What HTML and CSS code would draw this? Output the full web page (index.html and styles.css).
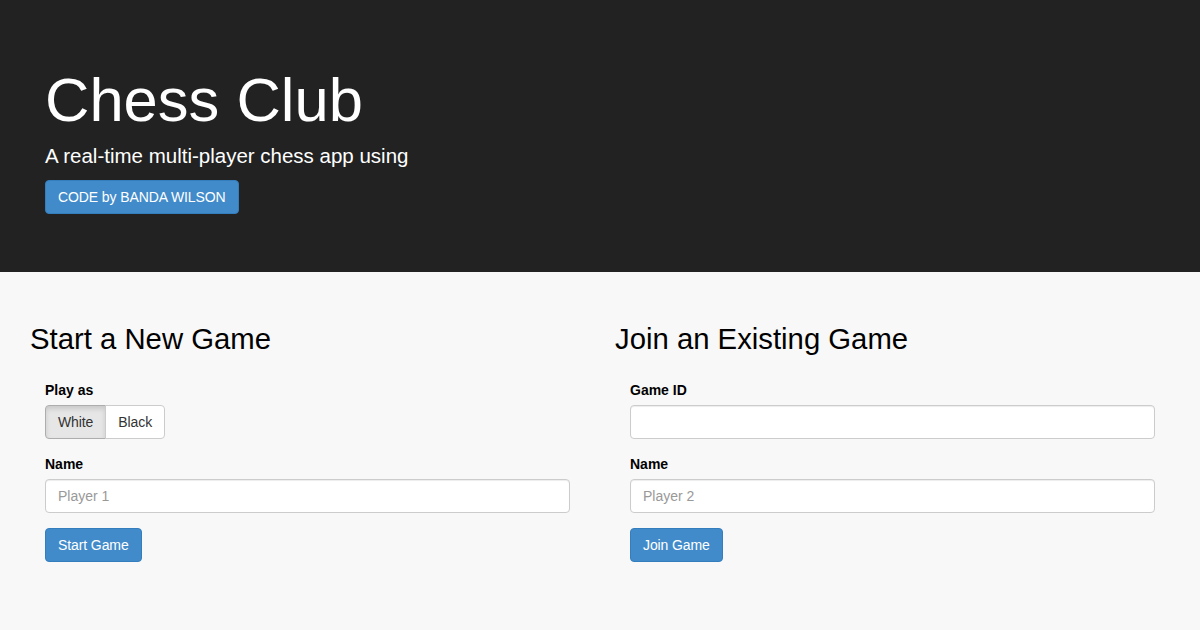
FILE: index.html
```html
<!DOCTYPE html>
<html>
<head>
<meta charset="utf-8">
<link rel="stylesheet" href="styles.css">
</head>
<body>
<header class="jumbotron">
  <h1 class="title">Chess Club</h1>
  <p class="lead">A real-time multi-player chess app using</p>
  <div><a class="btn btn-primary">CODE by BANDA WILSON</a></div>
</header>
<main class="main">
  <section class="col">
    <h2 class="heading">Start a New Game</h2>
    <form class="form">
      <div class="form-group">
        <label class="label">Play as</label>
        <div class="btn-group">
          <a class="btn btn-default active">White</a>
          <a class="btn btn-default">Black</a>
        </div>
      </div>
      <div class="form-group">
        <label class="label">Name</label>
        <input class="input" type="text" placeholder="Player 1">
      </div>
      <div><a class="btn btn-primary">Start Game</a></div>
    </form>
  </section>
  <section class="col">
    <h2 class="heading">Join an Existing Game</h2>
    <form class="form">
      <div class="form-group">
        <label class="label">Game ID</label>
        <input class="input" type="text">
      </div>
      <div class="form-group">
        <label class="label">Name</label>
        <input class="input" type="text" placeholder="Player 2">
      </div>
      <div><a class="btn btn-primary">Join Game</a></div>
    </form>
  </section>
</main>
</body>
</html>
```
FILE: styles.css
```css
* { box-sizing: border-box; }
html, body { margin: 0; padding: 0; }
body {
  width: 1200px;
  height: 630px;
  overflow: hidden;
  background: #f8f8f8;
  font-family: "Liberation Sans", Arial, sans-serif;
  font-size: 14px;
  line-height: 20px;
  color: #333;
}
.jumbotron {
  background: #222;
  color: #fff;
  height: 272px;
  padding: 66px 45px 0;
}
.title {
  margin: 0;
  font-size: 61.5px;
  font-weight: 400;
  line-height: 68px;
}
.lead {
  margin: 7px 0 9px;
  font-size: 20.5px;
  line-height: 30px;
  font-weight: 400;
}
.btn {
  display: inline-block;
  padding: 6px 12px;
  font-size: 14px;
  line-height: 20px;
  border: 1px solid transparent;
  border-radius: 4px;
  cursor: pointer;
  text-decoration: none;
  vertical-align: middle;
  letter-spacing: -0.1px;
}
.btn-primary {
  background: #428bca;
  border-color: #357ebd;
  color: #fff;
}
.btn-default {
  background: #fff;
  border-color: #ccc;
  color: #333;
}
.btn-default.active {
  background: #e6e6e6;
  border-color: #adadad;
  box-shadow: inset 0 3px 5px rgba(0,0,0,.125);
}
.btn-group { display: flex; }
.btn-group .btn { border-radius: 0; }
.btn-group .btn:first-child { border-radius: 4px 0 0 4px; }
.btn-group .btn:last-child { border-radius: 0 4px 4px 0; margin-left: -1px; }
.main {
  display: grid;
  grid-template-columns: 1fr 1fr;
  padding: 50px 15px 0;
}
.col { padding: 0 15px; }
.heading {
  margin: 0;
  font-size: 29.3px;
  font-weight: 400;
  line-height: 33px;
  color: #000;
}
.form { padding: 25px 15px 0; }
.form-group { margin-bottom: 15px; display: flex; flex-direction: column; align-items: flex-start; }
.label {
  display: block;
  font-weight: 700;
  margin-bottom: 5px;
  color: #000;
}
.input {
  display: block;
  width: 100%;
  height: 34px;
  padding: 6px 12px;
  font-family: inherit;
  font-size: 14px;
  line-height: 20px;
  color: #555;
  background: #fff;
  border: 1px solid #ccc;
  border-radius: 4px;
  box-shadow: inset 0 1px 1px rgba(0,0,0,.075);
}
.input::placeholder { color: #999; }
```
